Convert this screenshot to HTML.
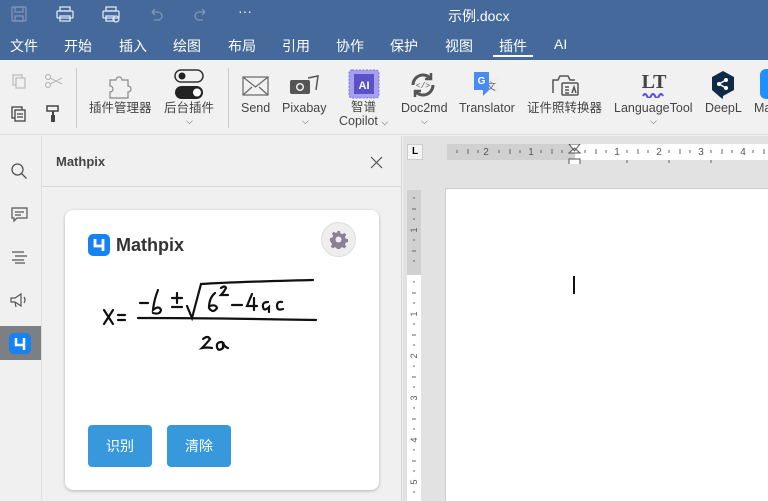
<!DOCTYPE html>
<html><head><meta charset="utf-8">
<style>
*{margin:0;padding:0;box-sizing:border-box}
body{width:768px;height:501px;overflow:hidden;position:relative;font-family:"Liberation Sans","Noto Sans CJK SC",sans-serif;background:#f0f0f0}
.a{position:absolute}
.top{left:0;top:0;width:768px;height:60px;background:#44699a;color:#fff}
.menu span{position:absolute;top:36px;font-size:14px}
.tb{left:0;top:60px;width:768px;height:75px;background:#f1f1f1;border-bottom:1px solid #ddd}
.lbl{position:absolute;font-size:12.5px;line-height:15px;color:#444;text-align:center;white-space:nowrap}
.chev{position:absolute;font-size:9px;color:#555}
.ic{position:absolute}
</style></head><body>
<div class="a top">
  <svg class="ic" style="left:10px;top:5px" width="18" height="18" viewBox="0 0 18 18" fill="none" stroke="#7f97bb" stroke-width="1.3"><rect x="2" y="2" width="14" height="14" rx="1"/><rect x="5" y="2" width="8" height="5"/><rect x="5" y="11" width="8" height="5"/></svg>
  <svg class="ic" style="left:55px;top:5px" width="20" height="18" viewBox="0 0 20 18" fill="none" stroke="#dfe6f0" stroke-width="1.3"><rect x="5" y="2" width="10" height="4"/><rect x="2" y="6" width="16" height="7" rx="1"/><rect x="5" y="11" width="10" height="5"/></svg>
  <svg class="ic" style="left:101px;top:5px" width="20" height="18" viewBox="0 0 20 18" fill="none" stroke="#dfe6f0" stroke-width="1.3"><rect x="5" y="2" width="10" height="4"/><rect x="2" y="6" width="16" height="7" rx="1"/><rect x="5" y="11" width="8" height="5"/><circle cx="15" cy="14" r="3"/></svg>
  <svg class="ic" style="left:148px;top:6px" width="16" height="16" viewBox="0 0 16 16" fill="none" stroke="#7f97bb" stroke-width="1.3"><path d="M4 6h6a4 4 0 010 8H6M4 6l3-3M4 6l3 3"/></svg>
  <svg class="ic" style="left:193px;top:6px" width="16" height="16" viewBox="0 0 16 16" fill="none" stroke="#7f97bb" stroke-width="1.3"><path d="M12 6H6a4 4 0 000 8h4M12 6L9 3M12 6L9 9"/></svg>
  <div class="a" style="left:238px;top:3px;font-size:14px;color:#eef">···</div>
  <div class="a" style="left:448px;top:6px;font-size:14px">示例.docx</div>
  <div class="menu">
    <span style="left:10px">文件</span><span style="left:64px">开始</span><span style="left:119px">插入</span><span style="left:173px">绘图</span><span style="left:228px">布局</span><span style="left:282px">引用</span><span style="left:336px">协作</span><span style="left:390px">保护</span><span style="left:445px">视图</span><span style="left:499px">插件</span><span style="left:554px">AI</span>
  </div>
  <div class="a" style="left:493px;top:55px;width:40px;height:2px;background:#fff"></div>
</div>
<div class="a tb">
  <svg class="ic" style="left:11px;top:13px" width="16" height="16" viewBox="0 0 16 16" fill="none" stroke="#bbb" stroke-width="1.2"><rect x="2" y="2" width="9" height="10"/><rect x="5" y="5" width="9" height="10" fill="#f1f1f1"/></svg>
  <svg class="ic" style="left:44px;top:13px" width="20" height="16" viewBox="0 0 20 16" fill="none" stroke="#bbb" stroke-width="1.2"><circle cx="4" cy="4" r="2.5"/><circle cx="4" cy="12" r="2.5"/><path d="M6 5l12 6M6 11l12-6"/></svg>
  <svg class="ic" style="left:11px;top:45px" width="16" height="18" viewBox="0 0 16 18" fill="none" stroke="#444" stroke-width="1.3"><rect x="1" y="2" width="10" height="11"/><rect x="4" y="5" width="10" height="11" fill="#f1f1f1"/><path d="M6 9h6M6 12h6"/></svg>
  <svg class="ic" style="left:46px;top:45px" width="14" height="18" viewBox="0 0 14 18" fill="#444"><rect x="1" y="1" width="11" height="5" fill="none" stroke="#444" stroke-width="1.5"/><rect x="6" y="6" width="2" height="4"/><rect x="5" y="10" width="4" height="7"/></svg>
  <div class="a" style="left:76px;top:8px;width:1px;height:60px;background:#ccc"></div>
  <svg class="ic" style="left:106px;top:10px" width="30" height="32" viewBox="0 0 30 32" fill="none" stroke="#888" stroke-width="1.2"><path d="M4 10h6a3 3 0 116 0h6v6a3 3 0 110 6v6H4v-6a3 3 0 100-6z"/></svg>
  <div class="lbl" style="left:89px;top:41px">插件管理器</div>
  <svg class="ic" style="left:173px;top:9px" width="32" height="32" viewBox="0 0 32 32"><rect x="2" y="1" width="28" height="12" rx="6" fill="none" stroke="#333" stroke-width="1.5"/><circle cx="9" cy="7" r="3.5" fill="#222"/><rect x="2" y="17" width="28" height="13" rx="6.5" fill="#222"/><circle cx="24" cy="23.5" r="4" fill="#fff"/></svg>
  <div class="lbl" style="left:164px;top:41px">后台插件</div>
  <div class="chev" style="left:186px;top:56px">⌵</div>
  <div class="a" style="left:228px;top:8px;width:1px;height:60px;background:#ccc"></div>
  <svg class="ic" style="left:242px;top:16px" width="27" height="20" viewBox="0 0 27 20" fill="none" stroke="#666" stroke-width="1.2"><rect x="1" y="1" width="25" height="18"/><path d="M1 1l12.5 10L26 1M1 19l9-8M26 19l-9-8"/></svg>
  <div class="lbl" style="left:241px;top:41px">Send</div>
  <svg class="ic" style="left:288px;top:14px" width="32" height="22" viewBox="0 0 32 22"><rect x="2" y="6" width="20" height="14" rx="2" fill="#555"/><circle cx="12" cy="13" r="4" fill="#eee"/><circle cx="12" cy="13" r="2.5" fill="#555"/><path d="M20 4l10-2-2 14" fill="none" stroke="#555" stroke-width="1.5"/></svg>
  <div class="lbl" style="left:282px;top:41px">Pixabay</div>
  <div class="chev" style="left:302px;top:56px">⌵</div>
  <svg class="ic" style="left:347px;top:9px" width="34" height="30" viewBox="0 0 34 30"><rect x="2" y="1" width="30" height="28" rx="3" fill="#a7a0f0" stroke="#7d74e0" stroke-dasharray="2 1.5"/><rect x="7" y="5" width="20" height="20" fill="#5a50c8"/><text x="17" y="20" font-size="11" font-family="Liberation Sans" font-weight="bold" fill="#fff" text-anchor="middle">AI</text></svg>
  <div class="lbl" style="left:351px;top:40px">智谱</div>
  <div class="lbl" style="left:339px;top:54px">Copilot <span style="font-size:9px">⌵</span></div>
  <svg class="ic" style="left:407px;top:9px" width="32" height="32" viewBox="0 0 32 32" fill="none" stroke="#555" stroke-width="3"><path d="M6 16a10 10 0 0118-6M26 16a10 10 0 01-18 6"/><path d="M24 4v6h-6M8 28v-6h6" stroke-width="2.5"/><text x="16" y="19" font-size="8" fill="#555" stroke="none" text-anchor="middle" font-family="Liberation Mono">&lt;/&gt;</text></svg>
  <div class="lbl" style="left:401px;top:41px">Doc2md</div>
  <div class="chev" style="left:421px;top:56px">⌵</div>
  <svg class="ic" style="left:473px;top:10px" width="28" height="30" viewBox="0 0 28 30"><rect x="11" y="8" width="15" height="15" fill="#eee"/><text x="18" y="20" font-size="10" fill="#666" text-anchor="middle" font-family="Noto Sans CJK SC">文</text><path d="M1 2h15v18l-6 6v-6H1z" fill="#4a8af4"/><text x="8.5" y="14" font-size="10" font-weight="bold" fill="#fff" text-anchor="middle" font-family="Liberation Sans">G</text></svg>
  <div class="lbl" style="left:459px;top:41px">Translator</div>
  <svg class="ic" style="left:550px;top:13px" width="30" height="24" viewBox="0 0 30 24" fill="none" stroke="#555" stroke-width="1.5"><path d="M3 20V7h5l2-4h8l2 4h5"/><rect x="12" y="10" width="16" height="12" rx="1"/><path d="M15 14h4M15 17h4M15 20h4M22 20l2-6 2 6"/></svg>
  <div class="lbl" style="left:527px;top:41px">证件照转换器</div>
  <svg class="ic" style="left:640px;top:8px" width="28" height="30" viewBox="0 0 28 30"><text x="14" y="20" font-size="20" font-weight="bold" fill="#444" text-anchor="middle" font-family="Liberation Serif">LT</text><path d="M3 28q2-4 4 0t4 0 4 0 4 0 4 0" fill="none" stroke="#5a4fe0" stroke-width="2"/></svg>
  <div class="lbl" style="left:614px;top:41px">LanguageTool</div>
  <div class="chev" style="left:650px;top:56px">⌵</div>
  <svg class="ic" style="left:710px;top:10px" width="26" height="30" viewBox="0 0 26 30"><path d="M13 1l11 6v13l-11 6v3l-3-2-8-7V7z" fill="#0f2b46"/><circle cx="9" cy="14" r="2" fill="#fff"/><circle cx="16" cy="10" r="2" fill="#fff"/><circle cx="16" cy="18" r="2" fill="#fff"/><path d="M9 14l7-4M9 14l7 4" stroke="#fff" stroke-width="1.3"/></svg>
  <div class="lbl" style="left:705px;top:41px">DeepL</div>
  <div class="a" style="left:760px;top:9px;width:20px;height:30px;border-radius:6px;background:#1e90ff"></div>
  <div class="lbl" style="left:754px;top:41px">Ma</div>
</div>
<div class="a" style="left:0;top:136px;width:42px;height:365px;background:#f0f0f0;border-right:1px solid #ddd"></div>
<svg class="ic" style="left:10px;top:162px" width="18" height="18" viewBox="0 0 18 18" fill="none" stroke="#555" stroke-width="1.3"><circle cx="7.5" cy="7.5" r="5.5"/><path d="M11.5 11.5l5 5"/></svg>
<svg class="ic" style="left:11px;top:207px" width="17" height="16" viewBox="0 0 17 16" fill="none" stroke="#555" stroke-width="1.2"><path d="M1 1h15v10H6l-3 3v-3H1z"/><path d="M4 5h9M4 8h6"/></svg>
<svg class="ic" style="left:11px;top:250px" width="17" height="14" viewBox="0 0 17 14" stroke="#555" stroke-width="1.2"><path d="M1 2h12M4 6h12M1 10h12M4 13h10"/></svg>
<svg class="ic" style="left:10px;top:292px" width="18" height="16" viewBox="0 0 18 16" fill="none" stroke="#555" stroke-width="1.2"><path d="M1 6h4l6-4v12l-6-4H1zM5 10l1 5M14 5q2 3 0 6"/></svg>
<div class="a" style="left:0;top:326px;width:41px;height:34px;background:#7c8084"></div>
<div class="a" style="left:9px;top:333px;width:22px;height:21px;border-radius:5px;background:#1683f3"></div>
<svg class="ic" style="left:11px;top:335px" width="18" height="17" viewBox="0 0 18 17" fill="none" stroke="#fff" stroke-width="2.5"><path d="M5 3v7h8M13 3v12"/></svg>
<div class="a" style="left:43px;top:136px;width:359px;height:365px;background:#f0f0f0;border-right:1px solid #d6d6d6"></div>
<div class="a" style="left:43px;top:186px;width:359px;height:1px;background:#d6d6d6"></div>
<div class="a" style="left:56px;top:154px;font-size:13px;font-weight:bold;color:#444">Mathpix</div>
<svg class="ic" style="left:370px;top:156px" width="13" height="13" viewBox="0 0 13 13" stroke="#555" stroke-width="1.2"><path d="M1 1l11 11M12 1L1 12"/></svg>
<div class="a" style="left:65px;top:210px;width:314px;height:280px;background:#fff;border-radius:8px;box-shadow:0 1px 3px rgba(0,0,0,.25)"></div>
<div class="a" style="left:88px;top:234px;width:22px;height:22px;border-radius:5px;background:#1683f3"></div>
<svg class="ic" style="left:90px;top:236px" width="18" height="18" viewBox="0 0 18 18" fill="none" stroke="#fff" stroke-width="2.8"><path d="M5 3v7h8M13 3v12"/></svg>
<div class="a" style="left:116px;top:235px;font-size:18px;font-weight:bold;color:#333">Mathpix</div>
<div class="a" style="left:321px;top:222px;width:35px;height:35px;border-radius:50%;background:#eee;border:1px solid #ddd"></div>
<svg class="ic" style="left:329px;top:230px" width="19" height="19" viewBox="0 0 20 20"><path fill="#8a8098" d="M8.5 1h3l.5 2.5 2 .9 2.2-1.4 2 2-1.4 2.2.9 2 2.5.5v3l-2.5.5-.9 2 1.4 2.2-2 2-2.2-1.4-2 .9-.5 2.5h-3l-.5-2.5-2-.9-2.2 1.4-2-2 1.4-2.2-.9-2L1 11.5v-3l2.5-.5.9-2L3 3.8l2-2 2.2 1.4 2-.9z"/><circle cx="10" cy="10" r="3.2" fill="#eee"/></svg>
<svg class="ic" style="left:100px;top:270px" width="225" height="90" viewBox="0 0 225 90" fill="none" stroke="#111" stroke-width="2.2" stroke-linecap="round"><path d="M4 40l9 14M13 40L4 54M18 45h7M18 50h7"/><path d="M40 33h8M58 20q-4 10-5 20q6-5 8 0q-1 5-8 3"/><path d="M72 28h10M77 23v10M72 37h10"/><path d="M87 36l5 12 9-34q30-2 112-4"/><path d="M115 23q-6 5-6 15q4 6 8 0q-1-4-7-2M121 18q4-3 5 0-2 4-5 7h7M132 35h10M152 24l-5 12h10M154 28v12M168 32q-6 0-5 5t6 0v5M182 32q-5-1-5 4t6 3"/><path d="M38 48q70 0 178 2"/><path d="M103 69q5-4 7 0-3 4-8 9q5-1 10 0M122 72q-6 0-5 5t6 1v-6q1 5 5 6"/></svg>
<div class="a" style="left:88px;top:425px;width:64px;height:42px;border-radius:4px;background:#3799db;color:#fff;font-size:14px;text-align:center;line-height:42px">识别</div>
<div class="a" style="left:167px;top:425px;width:64px;height:42px;border-radius:4px;background:#3799db;color:#fff;font-size:14px;text-align:center;line-height:42px">清除</div>
<div class="a" style="left:403px;top:136px;width:365px;height:365px;background:#e2e2e2"></div>
<div class="a" style="left:407px;top:144px;width:16px;height:16px;background:#f4f4f4;border:1px solid #ccc;font-size:10px;font-weight:bold;text-align:center;line-height:14px">L</div>
<div class="a" style="left:447px;top:144px;width:128px;height:16px;background:#d0d0d0"></div>
<div class="a" style="left:575px;top:144px;width:193px;height:16px;background:#fff"></div>
<svg class="ic" style="left:447px;top:144px" width="321" height="20" viewBox="0 0 321 20" font-family="Liberation Sans" font-size="10" fill="#555">
<g stroke="#666" stroke-width="1">
<path d="M10 6v3M21 5v5M31 6v3M52 6v3M63 5v5M73 6v3M94 6v3M105 5v5M115 6v3M138 6v3M149 5v5M159 6v3M180 6v3M191 5v5M201 6v3M222 6v3M233 5v5M243 6v3M264 6v3M275 5v5M285 6v3M306 6v3M317 5v5"/>
<path d="M180 16v3M222 16v3M264 16v3"/></g>
<text x="39" y="11" text-anchor="middle">2</text><text x="84" y="11" text-anchor="middle">1</text><text x="170" y="11" text-anchor="middle">1</text><text x="212" y="11" text-anchor="middle">2</text><text x="254" y="11" text-anchor="middle">3</text><text x="296" y="11" text-anchor="middle">4</text>
<path d="M122 0h11l-5.5 7zM122 15h11v6h-11z M122 9h11l-5.5-5z" fill="#fff" stroke="#555"/>
</svg>
<div class="a" style="left:407px;top:190px;width:14px;height:85px;background:#d0d0d0"></div>
<div class="a" style="left:407px;top:275px;width:14px;height:226px;background:#fff"></div>
<svg class="ic" style="left:407px;top:190px" width="14" height="311" viewBox="0 0 14 311" font-family="Liberation Sans" font-size="9" fill="#555"><g stroke="#666"><path d="M6 8h2M5 19h4M6 29h2M6 50h2M5 61h4M6 71h2M6 92h2M5 103h4M6 113h2M6 134h2M5 145h4M6 155h2M6 176h2M5 187h4M6 197h2M6 218h2M5 229h4M6 239h2M6 260h2M5 271h4M6 281h2M6 302h2"/></g>
<text transform="translate(10 40) rotate(-90)" text-anchor="middle">1</text><text transform="translate(10 124) rotate(-90)" text-anchor="middle">1</text><text transform="translate(10 166) rotate(-90)" text-anchor="middle">2</text><text transform="translate(10 208) rotate(-90)" text-anchor="middle">3</text><text transform="translate(10 250) rotate(-90)" text-anchor="middle">4</text><text transform="translate(10 292) rotate(-90)" text-anchor="middle">5</text></svg>
<div class="a" style="left:445px;top:188px;width:323px;height:313px;background:#fff;border-left:1px solid #ccc;border-top:1px solid #ccc"></div>
<div class="a" style="left:573px;top:276px;width:2px;height:18px;background:#111"></div>
</body></html>
